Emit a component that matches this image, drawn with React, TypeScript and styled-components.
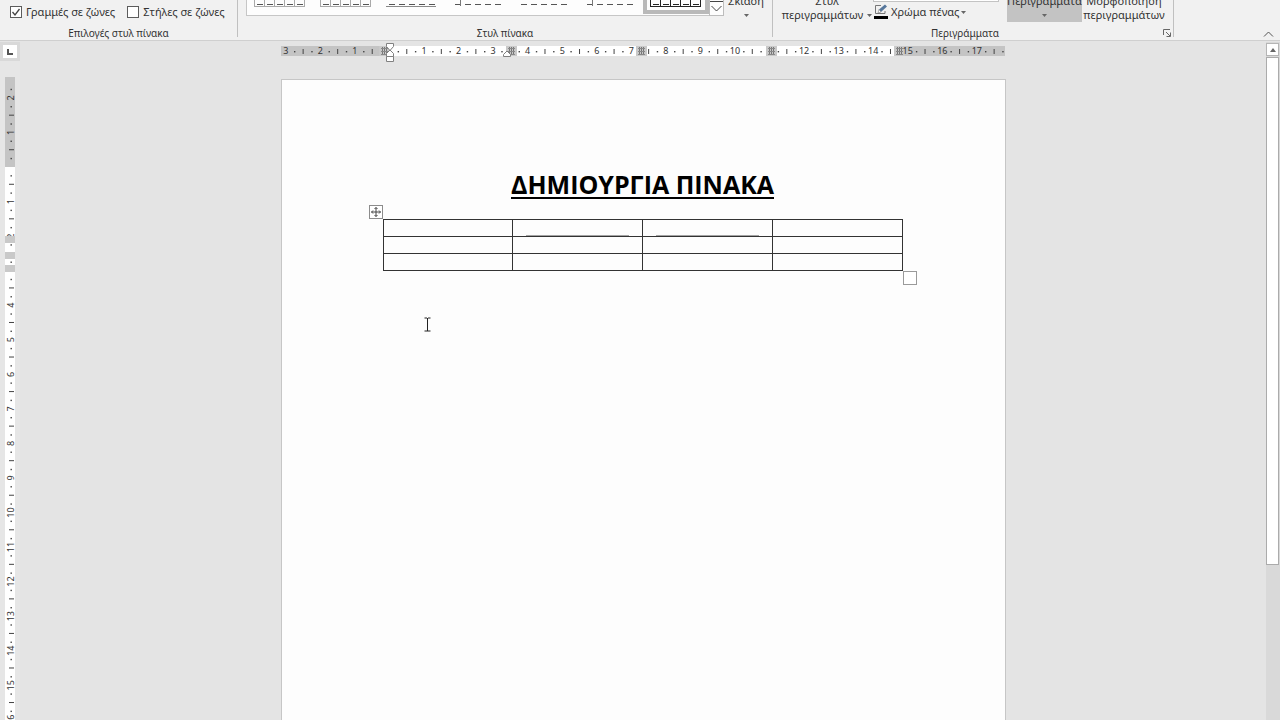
import React from 'react';
import styled, { createGlobalStyle, css } from 'styled-components';

const GlobalStyle = createGlobalStyle`
  * { box-sizing: border-box; }
  html, body, #root { height: 100%; }
  body {
    margin: 0;
    overflow: hidden;
    background: #e4e4e4;
    color: #333;
    font-family: 'Noto Sans', 'Open Sans', sans-serif;
    font-size: 11px;
    line-height: 14px;
  }
  button { font: inherit; color: inherit; border: 0; padding: 0; background: none; }
  svg { display: block; }
`;

const Shell = styled.div`
  display: flex;
  flex-direction: column;
  height: 100vh;
`;

/* ---------- ribbon ---------- */

const Ribbon = styled.header`
  display: flex;
  flex: none;
  height: 41px;
  background: #f1f1f1;
  border-bottom: 1px solid #cfcfcf;
`;

const Group = styled.section<{ $width: number }>`
  display: flex;
  flex-direction: column;
  flex: 0 0 ${p => p.$width}px;
  min-width: 0;
  height: 37px;
  border-right: 1px solid #c0c0c0;
`;

const Controls = styled.div<{ $pad: number }>`
  display: flex;
  flex: none;
  align-items: flex-end;
  height: 24px;
  overflow: hidden;
  padding-left: ${p => p.$pad}px;
`;

const Footer = styled.div`
  display: flex;
  flex: none;
  align-items: center;
  height: 18px;
`;

const Caption = styled.h2`
  flex: 1;
  margin: 0;
  font-size: 10px;
  font-weight: 400;
  line-height: 14px;
  text-align: center;
`;

const CheckLabel = styled.label`
  display: flex;
  align-items: center;
  gap: 4px;
  height: 24px;
  margin-right: 12px;
  white-space: nowrap;
`;

const Check = styled.input`
  appearance: none;
  width: 12px;
  height: 12px;
  margin: 0;
  border: 1px solid #5c5c5c;
  background: #fff;
`;

const CheckWrap = styled.span`
  position: relative;
  display: flex;
  svg { position: absolute; inset: 0; pointer-events: none; }
  input:not(:checked) + svg { display: none; }
`;

const Gallery = styled.div`
  display: flex;
  align-self: flex-start;
  height: 16px;
  background: #fdfdfd;
  border: solid #c6c6c6;
  border-width: 0 0 1px 1px;
`;

const StyleItem = styled.button<{ $selected?: boolean }>`
  display: flex;
  justify-content: center;
  width: 66px;
  height: 14px;
  ${p => p.$selected && css`
    border: solid #b9b9b9;
    border-width: 0 4px 4px;
  `}
`;

const MoreButton = styled.button`
  width: 15px;
  height: 16px;
  background: #fdfdfd;
  border: solid #bdbdbd;
  border-width: 0 1px 1px;
`;

const BigButton = styled.button<{ $width: number; $active?: boolean }>`
  display: flex;
  flex-direction: column;
  align-items: center;
  justify-content: flex-end;
  flex: none;
  width: ${p => p.$width}px;
  height: 60px;
  margin-bottom: 2px;
  white-space: nowrap;
  background: ${p => (p.$active ? '#c3c3c3' : 'transparent')};
`;

const Line = styled.span`
  display: flex;
  align-items: center;
  gap: 4px;
  height: 14px;
`;

const PenColumn = styled.div`
  flex: none;
  width: 134px;
  margin-bottom: 2px;
`;

const PenField = styled.div`
  width: 126px;
  height: 20px;
  background: #fff;
  border: 1px solid #c3c3c3;
`;

const PenButton = styled.button`
  display: flex;
  align-items: center;
  gap: 2px;
  height: 20px;
`;

const Launcher = styled.button`
  flex: none;
  margin: 0 2px 0 6px;
`;

const Collapse = styled.button`
  align-self: flex-end;
  margin: 0 6px 3px auto;
`;

/* ---------- work area ---------- */

const Workspace = styled.main`
  display: flex;
  flex: 1;
  min-height: 0;
  padding-top: 1px;
`;

const RulerColumn = styled.div`
  display: flex;
  flex-direction: column;
  flex: none;
  gap: 16px;
  width: 20px;
  overflow: hidden;
  background: #e6e6e6;
`;

const TabSelector = styled.button`
  flex: none;
  display: grid;
  place-items: center;
  width: 20px;
  height: 19px;
  background: #fff;
  border: 3px solid #d9d9d9;
`;

const VerticalRuler = styled.div`
  flex: none;
  padding-left: 5px;
`;

const Canvas = styled.div`
  display: flex;
  flex-direction: column;
  align-items: center;
  flex: 1;
  min-width: 0;
  overflow: hidden;
`;

const HorizontalRuler = styled.div`
  flex: none;
  width: 724px;
  height: 37px;
`;

const Page = styled.article`
  flex: 1 0 auto;
  width: 725px;
  padding: 89px 102px 0 101px;
  background: #fdfdfd;
  border: solid #c6c6c6;
  border-width: 1px 1px 0;
  position: relative;
`;

const Title = styled.h1`
  display: flex;
  justify-content: center;
  margin: 0 0 20px;
  color: #000;
  font: 700 25px/30px 'Open Sans', 'Noto Sans', sans-serif;
  span { border-bottom: 2px solid #000; height: 30px; }
`;

const TableBox = styled.div`
  position: relative;
  width: 520px;
`;

const Grid = styled.table`
  width: 100%;
  border-collapse: collapse;
  table-layout: fixed;
  td {
    height: 17px;
    padding: 0;
    border: 1px solid #333;
    vertical-align: bottom;
  }
`;

const CellRule = styled.div`
  height: 1px;
  margin: 0 13px;
  background: #a4a4a4;
`;

const MoveHandle = styled.button`
  position: absolute;
  left: -14px;
  top: -14px;
  width: 14px;
  height: 14px;
  background: #fff;
  border: 1px solid #8c8c8c;
`;

const SizeHandle = styled.button`
  position: absolute;
  right: -14px;
  bottom: -14px;
  width: 14px;
  height: 14px;
  background: #fff;
  border: 1px solid #9a9a9a;
`;

const Pointer = styled.svg`
  position: absolute;
  left: 142px;
  top: 237px;
`;

const Scrollbar = styled.div`
  display: flex;
  flex-direction: column;
  flex: none;
  width: 14px;
  padding: 1px 1px 0 0;
  background: #d9d9d9;
`;

const ScrollUp = styled.button`
  flex: none;
  display: grid;
  place-items: center;
  height: 13px;
  margin-bottom: 1px;
  background: #fff;
  border: 1px solid #b5b5b5;
`;

const Thumb = styled.div`
  height: 75%;
  background: #fff;
  border: 1px solid #ababab;
`;

/* ---------- drawings ---------- */

const CM = 34.55;

const Arrow = () => (
  <svg width="5" height="3" viewBox="0 0 5 3"><path d="M0 0h5L2.5 3z" fill="#666" /></svg>
);

type StyleKind = 'grid' | 'under' | 'first' | 'plain' | 'dark';

const StylePreview = ({ kind }: { kind: StyleKind }) => {
  const dark = kind === 'dark';
  const line = dark ? '#222' : '#a9a9a9';
  const boxed = dark || kind === 'grid';
  return (
    <svg width="52" height="10" viewBox="0 0 52 10" shapeRendering="crispEdges">
      {[0, 1, 2, 3, 4].map(i => (
        <rect key={i} x={3 + i * 10} y="4" width="6" height="1" fill={dark ? '#222' : '#555'} />
      ))}
      {boxed && [0, 1, 2, 3, 4, 5].map(i => (
        <rect key={i} x={i * 10} y="0" width="1" height="7" fill={line} />
      ))}
      {boxed && <rect x="0" y="6" width="51" height="1" fill={line} />}
      {kind === 'under' && <rect x="0" y="6" width="50" height="1" fill="#888" />}
      {kind === 'first' && <rect x="8" y="0" width="1" height="6" fill="#777" />}
    </svg>
  );
};

interface Mark { pos: number; type: 'num' | 'dot' | 'tick'; value: number }

const marks = (from: number, to: number): Mark[] => {
  const out: Mark[] = [];
  for (let q = from; q <= to; q++) {
    if (q === 0) continue;
    const type = q % 4 === 0 ? 'num' : q % 2 === 0 ? 'tick' : 'dot';
    out.push({ pos: (q * CM) / 4, type, value: Math.abs(q / 4) });
  }
  return out;
};

const Hatch = ({ x }: { x: number }) => (
  <g shapeRendering="crispEdges">
    <rect x={x} y="4" width="11" height="10" fill="#c9c9c9" />
    {[0, 1, 2].map(i => <rect key={i} x={x + 3 + i * 2} y="5" width="1" height="8" fill="#777" />)}
    {[0, 1, 2].map(i => <rect key={i} x={x + 2} y={6 + i * 3} width="7" height="1" fill="#888" />)}
  </g>
);

/* quarter marks that lie under a column marker are left out */
const hiddenTop = [-1, 14, 29, 44, 59];

const TopRuler = () => {
  const zero = 108.5;
  return (
    <svg width="724" height="22" viewBox="0 0 724 22" fontSize="9" fill="#333" textAnchor="middle">
      <rect x="0" y="4" width="724" height="10" fill="#fff" />
      <rect x="0" y="4" width="109" height="10" fill="#c4c4c4" />
      <rect x="614" y="4" width="110" height="10" fill="#c4c4c4" />
      <Hatch x={98} />
      <Hatch x={225} />
      <Hatch x={355} />
      <Hatch x={485} />
      <Hatch x={613} />
      {marks(-12, 71).map(m => {
        const x = zero + m.pos;
        if (hiddenTop.includes(Math.round((m.pos * 4) / CM))) return null;
        if (m.type === 'num') return <text key={m.pos} x={x} y="12">{m.value}</text>;
        if (m.type === 'tick') return <rect key={m.pos} x={x - 0.5} y="7" width="1" height="5" fill="#444" />;
        return <rect key={m.pos} x={x - 0.5} y="9" width="1.4" height="1.4" fill="#444" />;
      })}
      <g fill="#fff" stroke="#808080">
        <path d="M105.5 1.5h7v3l-3.5 4-3.5-4z" />
        <path d="M105.5 14.5v-3l3.5-3.5 3.5 3.5v3z" />
        <path d="M105.5 14.5h7v5h-7z" />
        <path d="M222.5 14.5v-2l3.5-3.5 3.5 3.5v2z" />
      </g>
    </svg>
  );
};

const SideRuler = () => {
  const zero = 90;
  return (
    <svg width="10" height="1300" viewBox="0 0 10 1300" fontSize="9" fill="#333" textAnchor="middle">
      <rect width="10" height="1300" fill="#fff" />
      <rect width="10" height="90" fill="#c4c4c4" />
      {marks(-9, 100).map(m => {
        const y = zero + m.pos;
        if (m.type === 'num') {
          return m.value === 3 ? null : (
            <text key={m.pos} transform={`translate(9 ${y}) rotate(-90)`}>{m.value}</text>
          );
        }
        if (m.type === 'tick') return <rect key={m.pos} x="4" y={y - 0.5} width="5" height="1" fill="#444" />;
        return <rect key={m.pos} x="5.5" y={y - 0.5} width="1.4" height="1.4" fill="#444" />;
      })}
      <rect y="159" width="10" height="7" fill="#c9c9c9" />
      <rect y="175" width="10" height="7" fill="#c9c9c9" />
      <rect y="188" width="10" height="7" fill="#c9c9c9" />
    </svg>
  );
};

const galleryItems: StyleKind[] = ['grid', 'grid', 'under', 'first', 'plain', 'first', 'dark'];

const Option = ({ text, checked }: { text: string; checked?: boolean }) => (
  <CheckLabel>
    <CheckWrap>
      <Check type="checkbox" defaultChecked={checked} />
      <svg width="12" height="12" viewBox="0 0 12 12">
        <path d="M2.5 6l2.5 3 4.5-6" fill="none" stroke="#444" strokeWidth="1.3" />
      </svg>
    </CheckWrap>
    {text}
  </CheckLabel>
);

export default function App() {
  return (
    <Shell>
      <GlobalStyle />
      <Ribbon>
        <Group $width={238}>
          <Controls $pad={10}>
            <Option text="Γραμμές σε ζώνες" checked />
            <Option text="Στήλες σε ζώνες" />
          </Controls>
          <Footer><Caption>Επιλογές στυλ πίνακα</Caption></Footer>
        </Group>

        <Group $width={535}>
          <Controls $pad={8}>
            <Gallery>
              {galleryItems.map((kind, i) => (
                <StyleItem key={i} $selected={kind === 'dark'} aria-label={`Στυλ ${i + 1}`}>
                  <StylePreview kind={kind} />
                </StyleItem>
              ))}
              <MoreButton aria-label="Περισσότερα">
                <svg width="13" height="15" viewBox="0 0 13 15" fill="none" stroke="#444">
                  <path d="M0 1.5h13M1.5 6l5 5 5-5" />
                </svg>
              </MoreButton>
            </Gallery>
            <BigButton $width={44}>
              <Line>Σκίαση</Line>
              <Line><Arrow /></Line>
            </BigButton>
          </Controls>
          <Footer><Caption>Στυλ πίνακα</Caption></Footer>
        </Group>

        <Group $width={401}>
          <Controls $pad={8}>
            <BigButton $width={92}>
              <Line>Στυλ</Line>
              <Line>περιγραμμάτων <Arrow /></Line>
            </BigButton>
            <PenColumn>
              <PenField />
              <PenButton>
                <svg width="16" height="16" viewBox="0 0 16 16">
                  <path d="M8 1.5H2.5v8H12V7" fill="none" stroke="#777" />
                  <path d="M6 5.5L12 0.5l2 2L8 8z" fill="#56779c" />
                  <path d="M5 9l1-3.5L8 8z" fill="#fff" stroke="#666" strokeWidth="0.5" />
                  <rect x="1" y="12" width="14" height="3" fill="#000" />
                </svg>
                Χρώμα πένας <Arrow />
              </PenButton>
            </PenColumn>
            <BigButton $width={75} $active>
              <Line>Περιγράμματα</Line>
              <Line><Arrow /></Line>
            </BigButton>
            <BigButton $width={84}>
              <Line>Μορφοποίηση</Line>
              <Line>περιγραμμάτων</Line>
            </BigButton>
          </Controls>
          <Footer>
            <Caption>Περιγράμματα</Caption>
            <Launcher aria-label="Επιλογές περιγραμμάτων">
              <svg width="8" height="8" viewBox="0 0 8 8" fill="none" stroke="#666">
                <path d="M0.5 6V0.5H7M3 3l4 4M7.5 3.5v4h-4" />
              </svg>
            </Launcher>
          </Footer>
        </Group>
        <Collapse aria-label="Σύμπτυξη κορδέλας">
          <svg width="11" height="6" viewBox="0 0 11 6" fill="none" stroke="#555">
            <path d="M1 5.5l4.5-4.5 4.5 4.5" />
          </svg>
        </Collapse>
      </Ribbon>

      <Workspace>
        <RulerColumn>
          <TabSelector aria-label="Στηλοθέτης">
            <svg width="6" height="6" viewBox="0 0 6 6"><path d="M1 0v5h5" fill="none" stroke="#555" strokeWidth="2" /></svg>
          </TabSelector>
          <VerticalRuler><SideRuler /></VerticalRuler>
        </RulerColumn>

        <Canvas>
          <HorizontalRuler><TopRuler /></HorizontalRuler>
          <Page>
            <Title><span>ΔΗΜΙΟΥΡΓΙΑ ΠΙΝΑΚΑ</span></Title>
            <TableBox>
              <Grid>
                <tbody>
                  {[0, 1, 2].map(row => (
                    <tr key={row}>
                      {[0, 1, 2, 3].map(col => (
                        <td key={col}>{row === 0 && (col === 1 || col === 2) && <CellRule />}</td>
                      ))}
                    </tr>
                  ))}
                </tbody>
              </Grid>
              <MoveHandle aria-label="Μετακίνηση πίνακα">
                <svg width="12" height="12" viewBox="0 0 12 12" fill="none" stroke="#444">
                  <path d="M6 1.5v9M1.5 6h9M4.5 3L6 1.5 7.5 3M4.5 9L6 10.5 7.5 9M3 4.5L1.5 6 3 7.5M9 4.5L10.5 6 9 7.5" />
                </svg>
              </MoveHandle>
              <SizeHandle aria-label="Αλλαγή μεγέθους πίνακα" />
            </TableBox>
            <Pointer width="8" height="15" viewBox="0 0 8 15" fill="none" stroke="#222">
              <path d="M0.5 1H3l0.5 0.5L4 1h2.5M3.5 1v13M0.5 14h6" />
            </Pointer>
          </Page>
        </Canvas>

        <Scrollbar>
          <ScrollUp aria-label="Κύλιση επάνω">
            <svg width="6" height="4" viewBox="0 0 6 4"><path d="M0 4h6L3 0z" fill="#666" /></svg>
          </ScrollUp>
          <Thumb />
        </Scrollbar>
      </Workspace>
    </Shell>
  );
}
